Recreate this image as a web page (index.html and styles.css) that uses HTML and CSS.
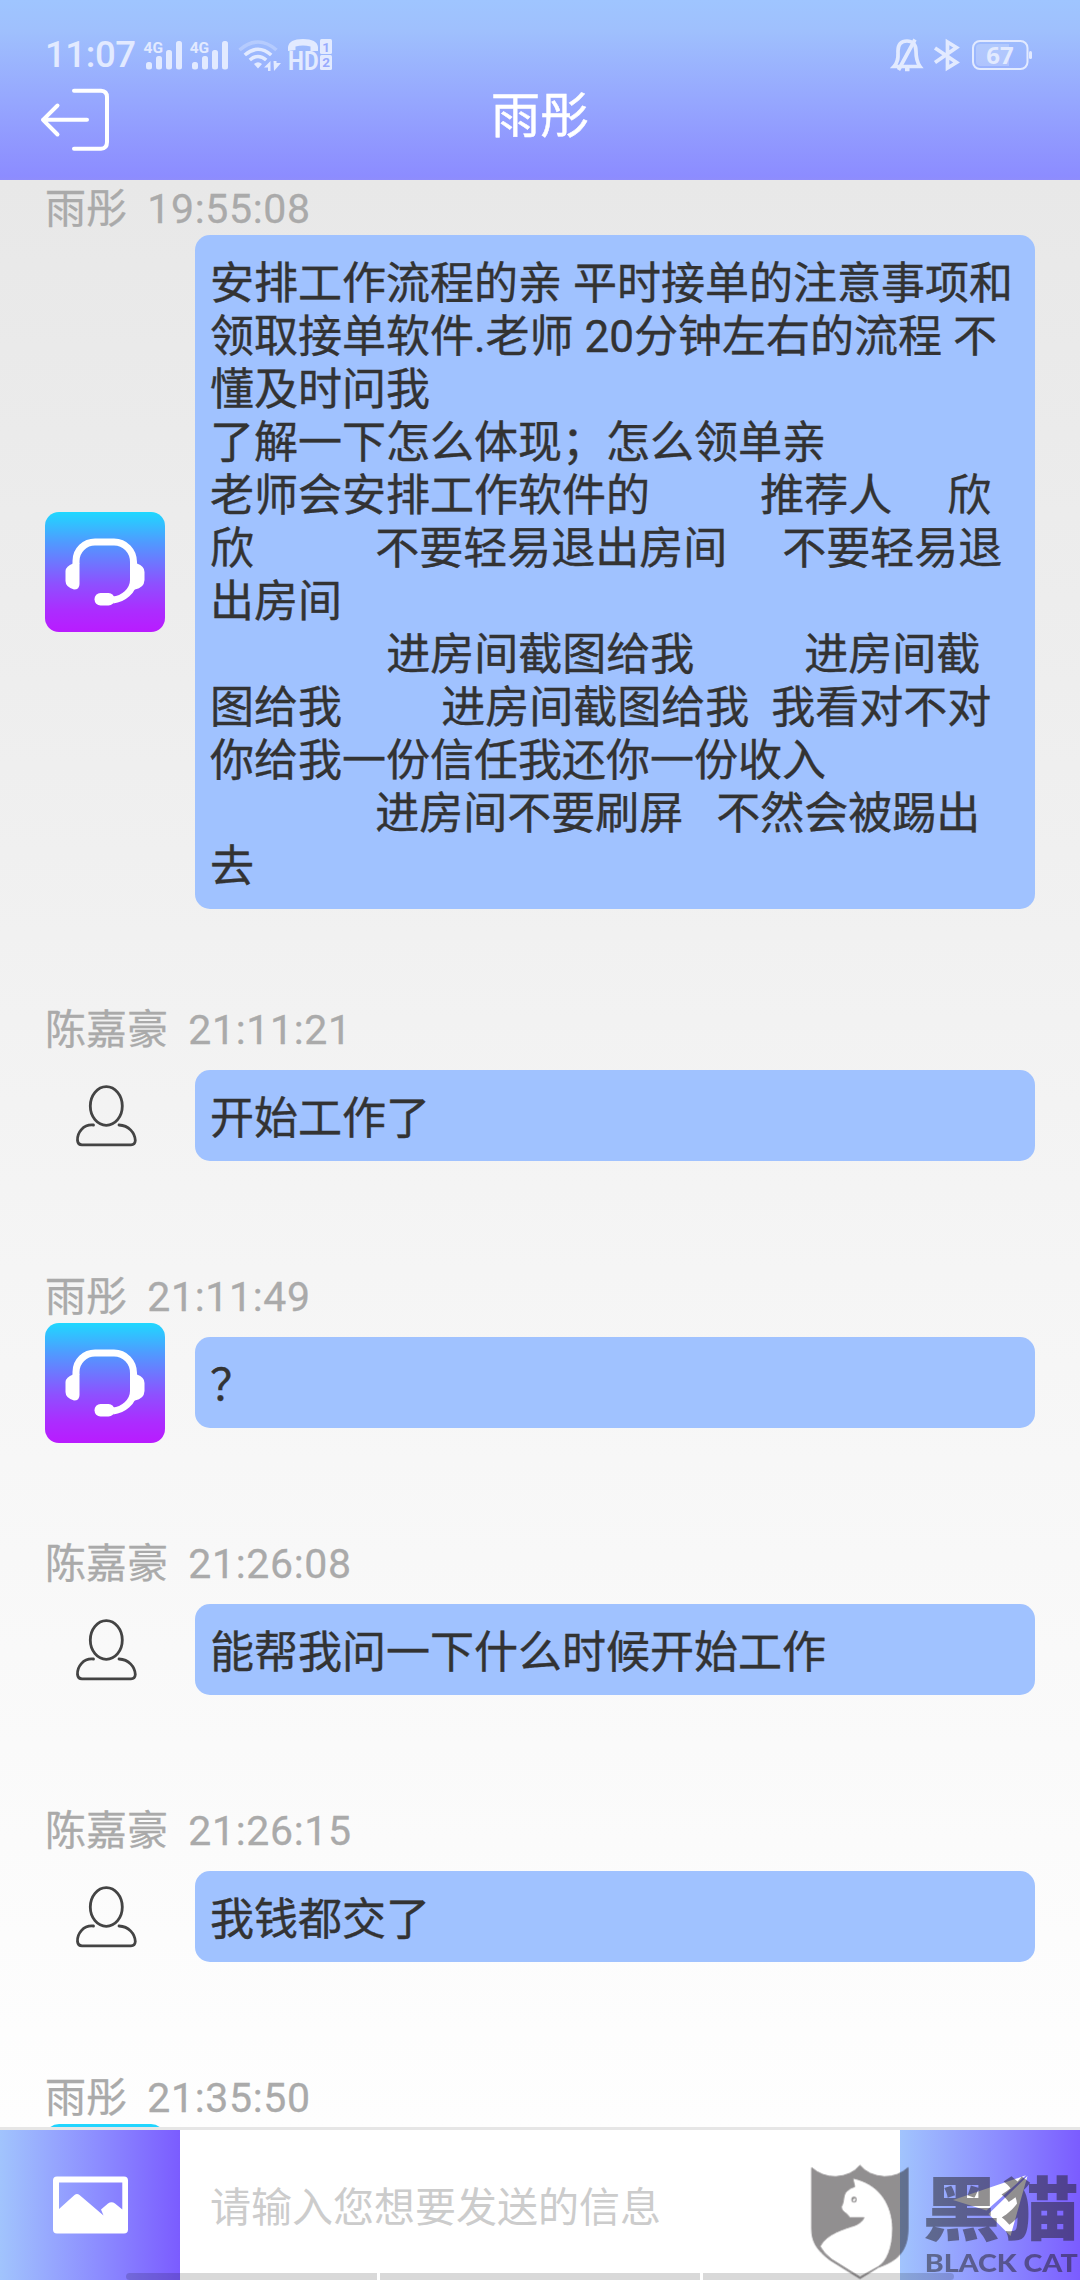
FILE: index.html
```
<!DOCTYPE html>
<html lang="zh-CN">
<head>
<meta charset="utf-8">
<title>雨彤</title>
<link rel="stylesheet" href="styles.css">
</head>
<body>
<svg class="defs" width="0" height="0" aria-hidden="true">
  <defs>
    <linearGradient id="agentFill" x1="0" y1="0" x2="0" y2="1">
      <stop offset="0" stop-color="#1fd8ff"/>
      <stop offset=".25" stop-color="#4f9bff"/>
      <stop offset=".6" stop-color="#8e50ff"/>
      <stop offset=".82" stop-color="#ab2dff"/>
      <stop offset="1" stop-color="#b91bff"/>
    </linearGradient>
    <symbol id="agent" viewBox="0 0 120 120">
      <rect width="120" height="120" rx="14" fill="url(#agentFill)"/>
      <path d="M31 52V49C31 38 40 30 50 30H69C80 30 88.500 39 88.500 50V68C88.500 79 78 87 68 88" fill="none" stroke="#fff" stroke-width="7"/>
      <path d="M28 51.500H34.500V72Q34.500 77.500 29 77.500Q20.500 75 20.500 69V59Q21 54 28 51.500ZM86 51.500H92Q99.500 54 99.500 60V68Q99 76 90 77.500H86Z" fill="#fff"/>
      <rect x="49.500" y="81" width="20" height="12.500" rx="6" fill="#fff"/>
    </symbol>
    <symbol id="person" viewBox="0 0 120 120">
      <g fill="none" stroke="#444" stroke-width="2.800" stroke-linecap="round">
        <ellipse cx="61.300" cy="50" rx="16" ry="19.300"/>
        <path d="M48.500 69C38 68 32 77 32.500 84.500Q33 88.800 37 88.800H86Q90 88.800 90.300 84.500C90 77 84 69.500 74 69"/>
      </g>
    </symbol>
  </defs>
</svg>
<div class="screen">
  <header class="header">
    <div class="status">
      <span class="clock">11:07</span>
      <svg class="signals" width="190" height="34" viewBox="144 38 190 34" fill="currentColor">
        <text x="143.500" y="53" class="net">4G</text>
        <rect x="146" y="62" width="6" height="7.500" rx="2.500"/><rect x="156" y="56" width="6" height="13.500" rx="2.500"/><rect x="166" y="50" width="6" height="19.500" rx="2.500"/><rect x="176" y="41" width="6" height="28.500" rx="2.500"/>
        <text x="189.700" y="53" class="net">4G</text>
        <rect x="192" y="62" width="6" height="7.500" rx="2.500"/><rect x="202" y="56" width="6" height="13.500" rx="2.500"/><rect x="212" y="50" width="6" height="19.500" rx="2.500"/><rect x="222" y="41" width="6" height="28.500" rx="2.500"/>
        <g fill="none" stroke="currentColor" stroke-width="3.600">
          <path d="M239.500 50Q258 34 276.500 50" opacity=".35"/>
          <path d="M244.800 55Q258 43.500 271.200 55"/>
          <path d="M249.800 60Q258 53 266.200 60"/>
        </g>
        <path d="M254 64Q258 60.500 262 64L258 68.500ZM270.500 61V71H268V67.500H264ZM273.500 61L274 71 281 63H276.500V61Z"/>
        <path d="M288 51V47Q289 39 303 39T318 47V51H310.500V46.500Q303 44.500 295.500 46.500V50Z"/>
        <text x="288" y="69.700" class="hd" textLength="30.500" lengthAdjust="spacingAndGlyphs">HD</text>
        <rect x="320" y="39" width="12" height="15" rx="1.500"/><rect x="320" y="55" width="12" height="15" rx="1.500"/>
        <text x="326" y="51.500" class="sim">1</text><text x="326" y="67.300" class="sim">2</text>
      </svg>
      <svg class="system" width="142" height="34" viewBox="891 38 142 34" fill="currentColor">
        <g fill="none" stroke="currentColor" stroke-width="3.700">
          <path d="M894 66.500C899 61 898 56 898 51C898 43 902 41 907 41S916 44 916 51C916 56 916 61 920 66.500Z"/>
          <path d="M915 39.500L898.500 70M905 69.500H909.500"/>
          <path d="M935 48L956.500 62.500 947.500 68V42L956.500 47.500 935 62.500"/>
        </g>
        <rect x="973" y="41" width="54.500" height="28" rx="7" fill="none" stroke="currentColor" stroke-width="2"/>
        <path d="M980 44H1009V66H980Q976 66 976 62V48Q976 44 980 44Z" opacity=".3"/>
        <rect x="1029" y="51" width="3" height="8" rx="1.500"/>
        <text x="1000" y="64" class="level">67</text>
      </svg>
    </div>
    <div class="titlebar">
      <svg class="back" width="70" height="64" viewBox="39 88 70 64" fill="none" stroke="#fff" stroke-width="4" stroke-linecap="round" stroke-linejoin="round">
        <path d="M74 90.700H101Q107 91 107 97V142Q107 148.500 101 148.800H74M87 119.800H43M57.500 105.500L43 119.800 57.500 134.500"/>
      </svg>
      <h1 class="title">雨彤</h1>
      <span></span>
    </div>
  </header>

  <main class="chat">
    <article class="message">
      <div class="meta">雨彤  <time>19:55:08</time></div>
      <div class="row"><svg class="avatar"><use href="#agent"/></svg><div class="bubble">安排工作流程的亲 平时接单的注意事项和
领取接单软件.老师 20分钟左右的流程 不
懂及时问我
了解一下怎么体现；怎么领单亲
老师会安排工作软件的          推荐人     欣
欣           不要轻易退出房间     不要轻易退
出房间
                进房间截图给我          进房间截
图给我         进房间截图给我  我看对不对
你给我一份信任我还你一份收入
               进房间不要刷屏   不然会被踢出
去</div></div>
    </article>
    <article class="message">
      <div class="meta">陈嘉豪  <time>21:11:21</time></div>
      <div class="row"><svg class="avatar"><use href="#person"/></svg><div class="bubble">开始工作了</div></div>
    </article>
    <article class="message">
      <div class="meta">雨彤  <time>21:11:49</time></div>
      <div class="row"><svg class="avatar"><use href="#agent"/></svg><div class="bubble">？</div></div>
    </article>
    <article class="message">
      <div class="meta">陈嘉豪  <time>21:26:08</time></div>
      <div class="row"><svg class="avatar"><use href="#person"/></svg><div class="bubble">能帮我问一下什么时候开始工作</div></div>
    </article>
    <article class="message">
      <div class="meta">陈嘉豪  <time>21:26:15</time></div>
      <div class="row"><svg class="avatar"><use href="#person"/></svg><div class="bubble">我钱都交了</div></div>
    </article>
    <article class="message">
      <div class="meta">雨彤  <time>21:35:50</time></div>
      <div class="row"><svg class="avatar"><use href="#agent"/></svg></div>
    </article>
  </main>

  <footer class="composer">
    <button class="action" aria-label="图片">
      <svg width="180" height="150" viewBox="0 0 180 150">
        <path fill="#fff" fill-rule="evenodd" d="M57 46.500H124Q128 46.500 128 50.500V99.500Q128 103.500 124 103.500H57Q53 103.500 53 99.500V50.500Q53 46.500 57 46.500ZM59 52.500V79L74.500 65Q77 63 79.500 65L103.500 85.500 101 79.500 108 73.500Q111.500 71 115 73.500L122.300 79.500V52.500Z"/>
      </svg>
    </button>
    <input class="field" type="text" placeholder="请输入您想要发送的信息">
    <button class="action" aria-label="发送">
      <svg width="180" height="150" viewBox="0 0 180 150" fill="#fff">
        <path d="M53 70L126 45.300 86.500 80.500ZM127.500 46L110.500 106 88.500 84Z"/>
      </svg>
    </button>
  </footer>

  <div class="gesture"><i></i><i></i><i></i></div>

  <svg class="watermark" width="270" height="117" viewBox="90 129 810 351">
    <g class="mark">
      <path class="edge" fill-rule="evenodd" d="M95 143Q125 170 167 170Q215 167 240 136Q265 167 313 170Q355 170 384 143V325C384 405 340 425 295 442L240 476 150 420C110 390 95 365 95 325ZM218 174L233 178C300 198 337 255 338 325C338 385 320 425 295 440L240 471 155 418Q130 399 120 379C140 340 195 326 225 316Q245 308 252 293H208C203 277 185 279 184 260C194 244 187 225 201 213Q211 203 224 200Z"/>
      <path fill-rule="evenodd" d="M222 230A8 9 0 1 0 222 248A8 9 0 1 0 222 230ZM224 234L218 240 221 246 227 239Z"/>
      <text class="brand" transform="translate(427 345) scale(1 .92)" textLength="470" lengthAdjust="spacingAndGlyphs">黑猫</text>
      <text class="latin" x="434" y="457" textLength="459" lengthAdjust="spacingAndGlyphs">BLACK CAT</text>
    </g>
  </svg>
</div>
</body>
</html>
```
FILE: styles.css
```
* { box-sizing: border-box; }

body {
  margin: 0;
  font-family: Roboto, "Noto Sans CJK SC", sans-serif;
}

.defs { position: absolute; }

.screen {
  position: relative;
  display: flex;
  flex-direction: column;
  width: 1080px;
  height: 2280px;
  overflow: hidden;
  background: #fff;
}

.header {
  flex: none;
  height: 180px;
  background: linear-gradient(#9fc5ff 0, #9fc0fd 30px, #8c8cff 176px, #8f8dfb 100%);
}

.status {
  display: flex;
  align-items: center;
  height: 74px;
  padding: 36px 47px 0 45px;
  color: #e2eaff;
}

.clock {
  width: 99px;
  font-size: 36.500px;
  font-weight: 500;
  line-height: 38px;
  letter-spacing: -0.400px;
}

.signals, .system { overflow: visible; }
.system { margin-left: auto; }
.net { font: 700 15.500px Roboto, sans-serif; }
.hd { font: 700 25px Roboto, sans-serif; }
.sim { font: 700 13.500px Roboto, sans-serif; text-anchor: middle; fill: #97aafd; }
.level { font: 700 24px "Noto Sans", sans-serif; text-anchor: middle; }

.titlebar {
  display: grid;
  grid-template-columns: 1fr auto 1fr;
  align-items: center;
  height: 92px;
  padding: 0 39px;
}

.title {
  margin: 0;
  padding-bottom: 7px;
  color: #fff;
  font-size: 49px;
  font-weight: 400;
  line-height: 60px;
  -webkit-text-stroke: 0.500px;
}

.chat {
  flex: none;
  display: flex;
  flex-direction: column;
  gap: 98px;
  height: 1947px;
  padding: 6px 45px 0;
  overflow: hidden;
  background: linear-gradient(#e8e8e8, #f5f5f5 56%, #fefefe);
}

.message { flex: none; }

.meta {
  height: 49px;
  color: #aaa;
  font-size: 41px;
  line-height: 46px;
  white-space: pre;
  -webkit-text-stroke: 0.300px;
}

.meta time { letter-spacing: 0.650px; }

.row {
  display: flex;
  align-items: center;
  gap: 30px;
  min-height: 120px;
}

.avatar {
  flex: none;
  width: 120px;
  height: 120px;
}

.bubble {
  flex: 1;
  margin: -0.500px 0 0.500px;
  padding: 23px 15px 15px;
  border-radius: 15px;
  background: #a0c2ff;
  color: #333;
  font-size: 44px;
  line-height: 53px;
  white-space: pre;
  word-spacing: 0.100px;
  -webkit-text-stroke: 0.400px;
}

.composer {
  flex: none;
  display: flex;
  height: 153px;
  border-top: 3px solid #e6e6e6;
  background: #fff;
}

.action {
  flex: none;
  width: 180px;
  padding: 0;
  border: 0;
  background: linear-gradient(90deg, #a1c4fd, #8c8cff 55%, #7b5cff);
}

.action svg { display: block; }

.field {
  flex: 1;
  min-width: 0;
  padding: 5px 30px 0;
  border: 0;
  background: #fff;
  font: 41px Roboto, "Noto Sans CJK SC", sans-serif;
}

.field::placeholder { color: #ccc; opacity: 1; }

/* navigation hints drawn over the bottom edge */
.gesture {
  position: absolute;
  right: 126px;
  bottom: 0;
  left: 126px;
  display: grid;
  grid-template-columns: 251px 1fr 251px;
  gap: 3px;
  height: 7px;
}

.gesture i { background: rgba(0, 0, 0, .15); }
.gesture i:first-child { border-radius: 4px 0 0 4px; }
.gesture i:last-child { border-radius: 0 4px 4px 0; }

/* translucent brand stamp over the composer */
.watermark {
  position: absolute;
  right: 0;
  bottom: 0;
}

.mark { fill: #231e20; opacity: .5; }
.edge { stroke: #231e20; stroke-width: 3; }
.brand { font: 900 228px "Noto Sans CJK SC", sans-serif; }
.latin { font: 900 73px Lato, sans-serif; }
```
